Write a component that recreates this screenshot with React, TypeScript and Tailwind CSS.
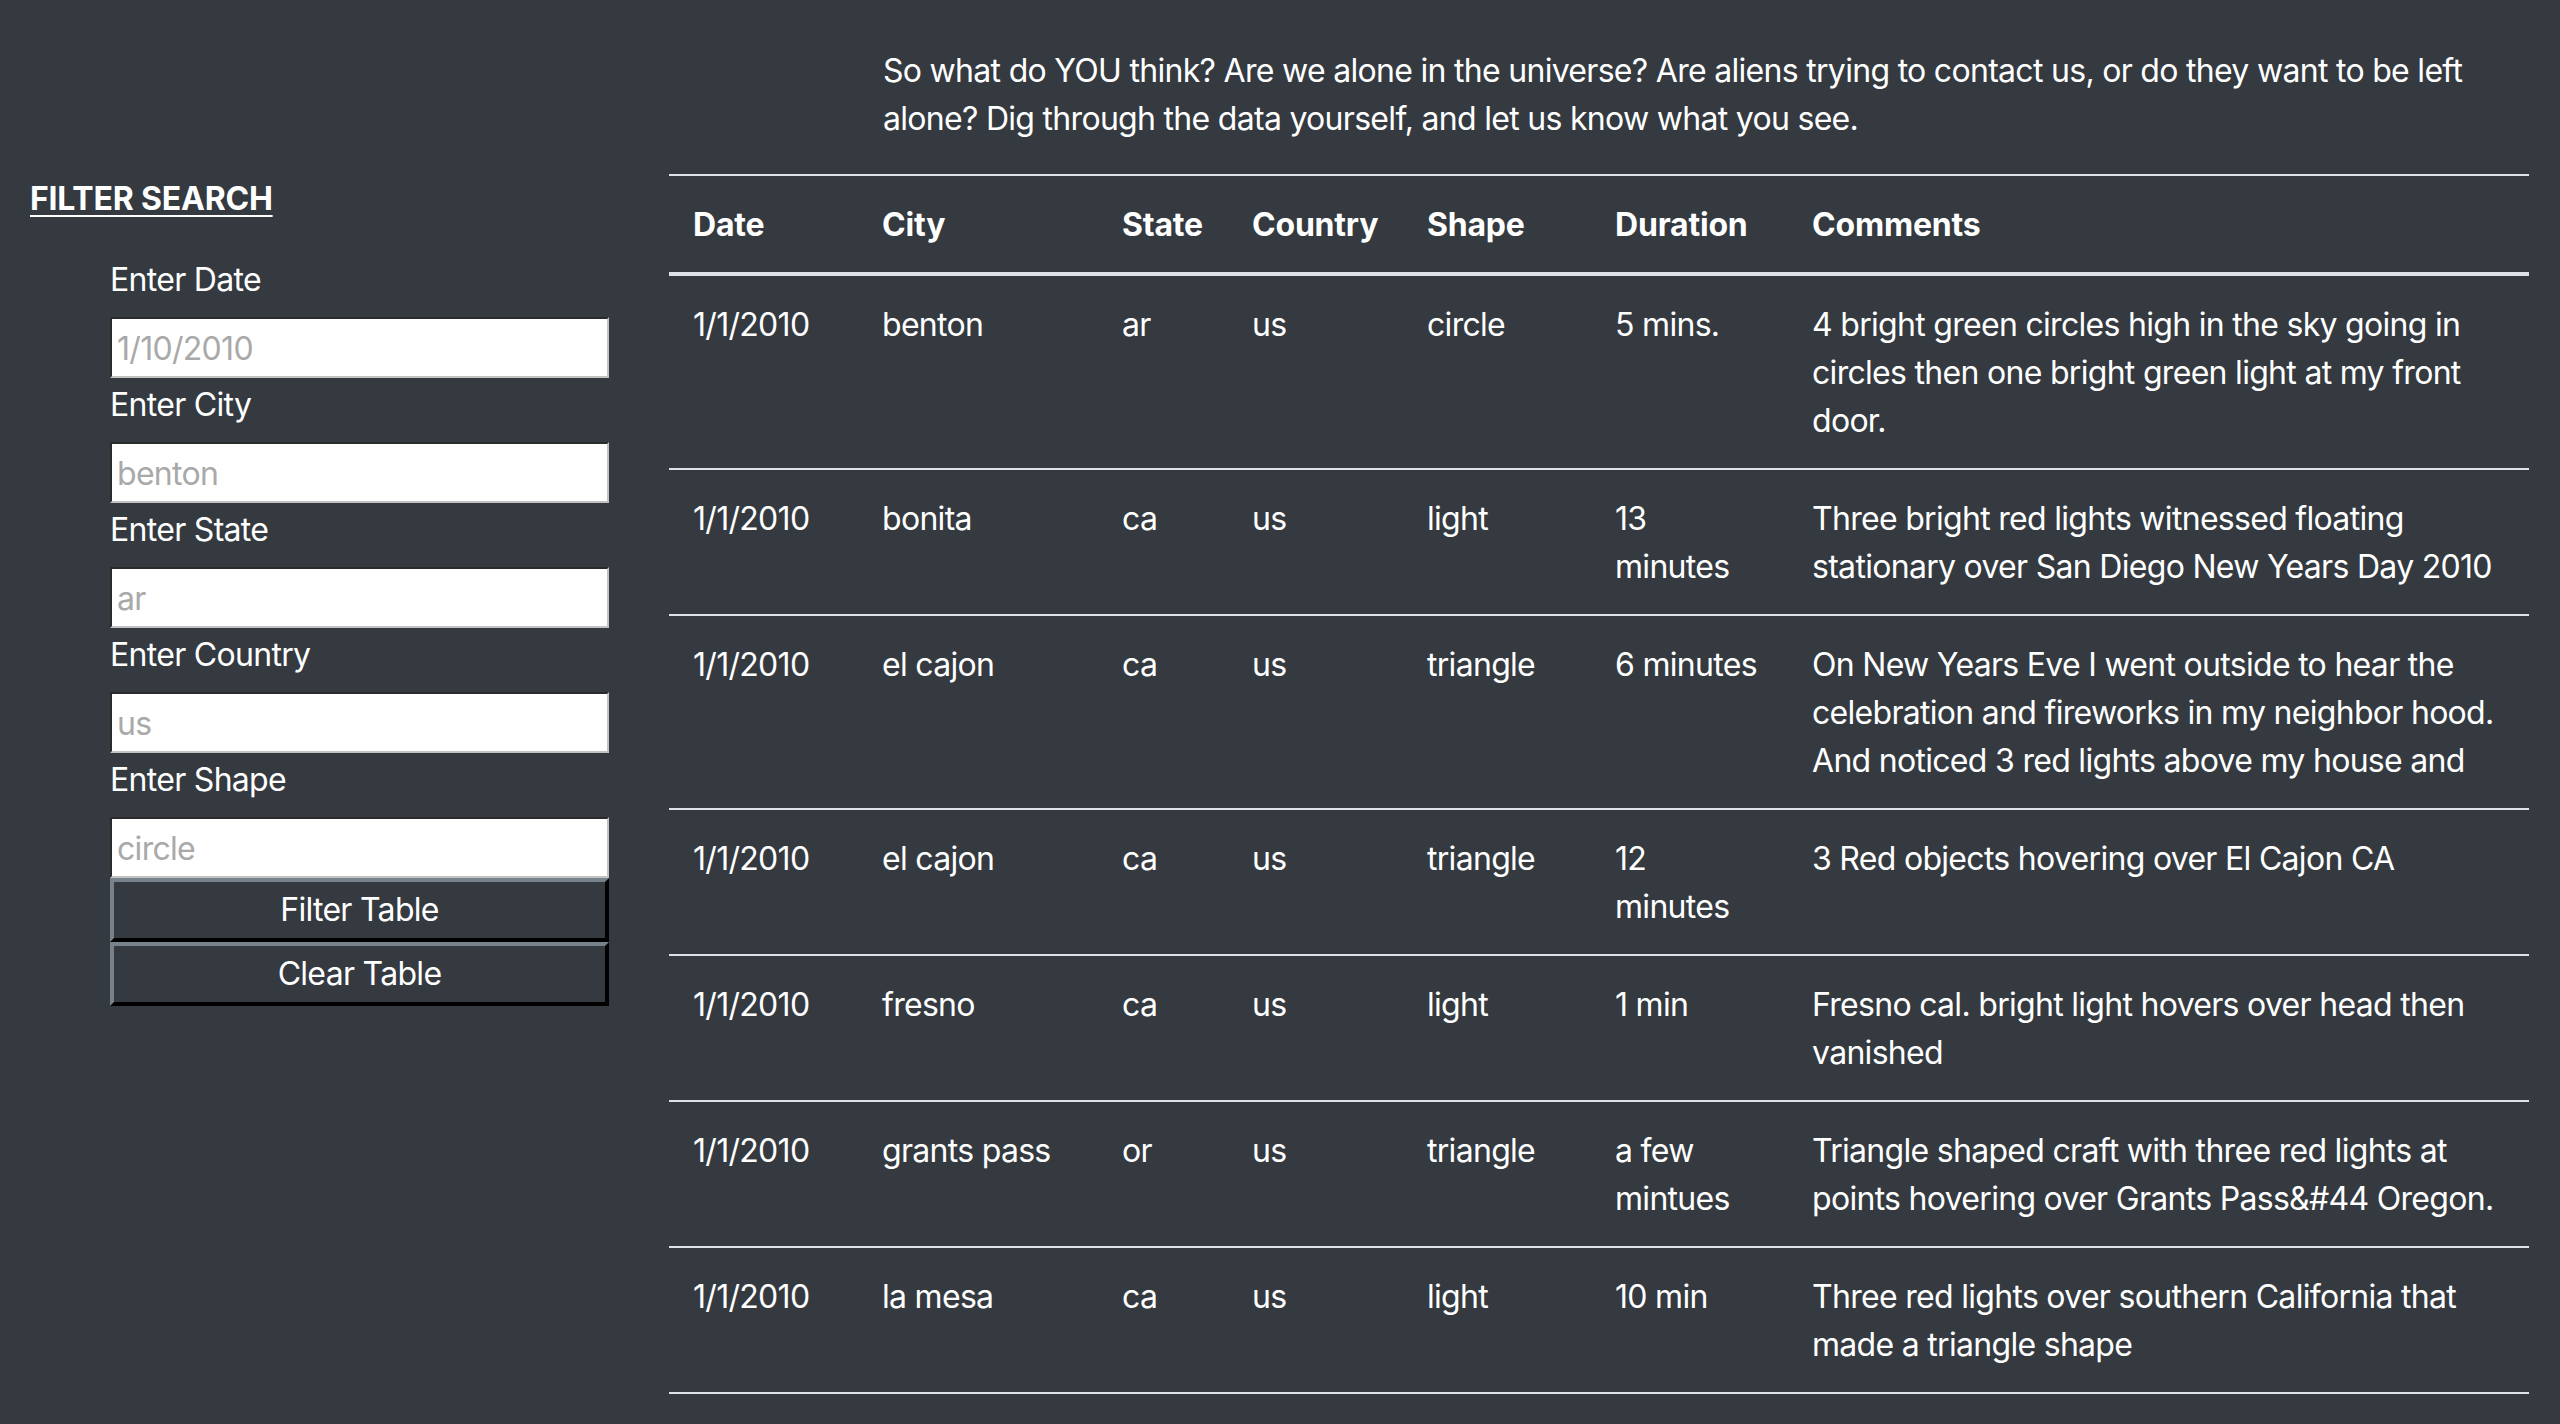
import { useState } from 'react';

type Sighting = {
  datetime: string;
  city: string;
  state: string;
  country: string;
  shape: string;
  durationMinutes: string;
  comments: string;
};

const data: Sighting[] = [
  {
    datetime: '1/1/2010',
    city: 'benton',
    state: 'ar',
    country: 'us',
    shape: 'circle',
    durationMinutes: '5 mins.',
    comments: '4 bright green circles high in the sky going in circles then one bright green light at my front door.',
  },
  {
    datetime: '1/1/2010',
    city: 'bonita',
    state: 'ca',
    country: 'us',
    shape: 'light',
    durationMinutes: '13 minutes',
    comments: 'Three bright red lights witnessed floating stationary over San Diego New Years Day 2010',
  },
  {
    datetime: '1/1/2010',
    city: 'el cajon',
    state: 'ca',
    country: 'us',
    shape: 'triangle',
    durationMinutes: '6 minutes',
    comments:
      'On New Years Eve I went outside to hear the celebration and fireworks in my neighbor hood. And noticed 3 red lights above my house and',
  },
  {
    datetime: '1/1/2010',
    city: 'el cajon',
    state: 'ca',
    country: 'us',
    shape: 'triangle',
    durationMinutes: '12 minutes',
    comments: '3 Red objects hovering over El Cajon CA',
  },
  {
    datetime: '1/1/2010',
    city: 'fresno',
    state: 'ca',
    country: 'us',
    shape: 'light',
    durationMinutes: '1 min',
    comments: 'Fresno cal. bright light hovers over head then vanished',
  },
  {
    datetime: '1/1/2010',
    city: 'grants pass',
    state: 'or',
    country: 'us',
    shape: 'triangle',
    durationMinutes: 'a few mintues',
    comments: 'Triangle shaped craft with three red lights at points hovering over Grants Pass&#44 Oregon.',
  },
  {
    datetime: '1/1/2010',
    city: 'la mesa',
    state: 'ca',
    country: 'us',
    shape: 'light',
    durationMinutes: '10 min',
    comments: 'Three red lights over southern California that made a triangle shape',
  },
];

const filters = [
  { id: 'datetime', label: 'Enter Date', placeholder: '1/10/2010' },
  { id: 'city', label: 'Enter City', placeholder: 'benton' },
  { id: 'state', label: 'Enter State', placeholder: 'ar' },
  { id: 'country', label: 'Enter Country', placeholder: 'us' },
  { id: 'shape', label: 'Enter Shape', placeholder: 'circle' },
];

export default function App() {
  const [values, setValues] = useState<Record<string, string>>({});

  return (
    <div className="min-h-screen bg-[#343a40] text-white font-['Inter','Noto_Sans',sans-serif] text-[32px] leading-[48px] tracking-[-0.7px]">
      <div className="flex">
        {/* sidebar */}
        <aside className="w-[669px] shrink-0 pt-[175px] pl-[30px]">
          <h5 className="font-bold tracking-[-0.2px] underline underline-offset-[5px] decoration-[2px]">FILTER SEARCH</h5>
          <ul className="mt-[30px] pl-[80px] w-[579px]">
            {filters.map((f) => (
              <li key={f.id} className="flex flex-col">
                <label htmlFor={f.id} className="mt-[3px] mb-[13px] h-[48px]">
                  {f.label}
                </label>
                <input
                  id={f.id}
                  type="text"
                  value={values[f.id] || ''}
                  onChange={(e) => setValues({ ...values, [f.id]: e.target.value })}
                  placeholder={f.placeholder}
                  className="h-[61px] w-[499px] bg-white text-black px-[5px] pt-[2px] border-2 border-t-[#2a2a2a] border-l-[#2a2a2a] border-b-[#c2c2c2] border-r-[#c2c2c2] placeholder:text-[#a9a9a9] outline-none"
                />
              </li>
            ))}
            <li className="flex flex-col">
              <button className="h-[64px] w-[499px] bg-[#343a40] text-white border-4 border-t-[#78828c] border-l-[#78828c] border-b-black border-r-black">
                Filter Table
              </button>
              <button className="h-[64px] w-[499px] bg-[#343a40] text-white border-4 border-t-[#78828c] border-l-[#78828c] border-b-black border-r-black">
                Clear Table
              </button>
            </li>
          </ul>
        </aside>

        {/* main content */}
        <main className="flex-1 pr-[31px]">
          <p className="ml-[214px] pt-[47px] mb-[31px]">
            So what do YOU think? Are we alone in the universe? Are aliens trying to contact us, or do they want to be
            left alone? Dig through the data yourself, and let us know what you see.
          </p>
          <table className="table-fixed w-[1860px] border-collapse text-left">
            <colgroup>
              <col className="w-[189px]" />
              <col className="w-[240px]" />
              <col className="w-[130px]" />
              <col className="w-[175px]" />
              <col className="w-[188px]" />
              <col className="w-[197px]" />
              <col className="w-[741px]" />
            </colgroup>
            <thead>
              <tr className="border-t-2 border-t-[#dee2e6] border-b-4 border-b-[#dee2e6]">
                {['Date', 'City', 'State', 'Country', 'Shape', 'Duration', 'Comments'].map((h) => (
                  <th key={h} className="pt-[25px] pb-[23px] px-[24px] font-bold tracking-[-0.2px] align-bottom">
                    {h}
                  </th>
                ))}
              </tr>
            </thead>
            <tbody>
              {data.map((row, i) => (
                <tr key={i} className="border-b-2 border-b-[#dee2e6]">
                  <td className="pt-[25px] pb-[23px] px-[24px] align-top">{row.datetime}</td>
                  <td className="pt-[25px] pb-[23px] px-[24px] align-top">{row.city}</td>
                  <td className="pt-[25px] pb-[23px] px-[24px] align-top">{row.state}</td>
                  <td className="pt-[25px] pb-[23px] px-[24px] align-top">{row.country}</td>
                  <td className="pt-[25px] pb-[23px] px-[24px] align-top">{row.shape}</td>
                  <td className="pt-[25px] pb-[23px] px-[24px] align-top">{row.durationMinutes}</td>
                  <td className="pt-[25px] pb-[23px] px-[24px] align-top">{row.comments}</td>
                </tr>
              ))}
            </tbody>
          </table>
        </main>
      </div>
    </div>
  );
}
